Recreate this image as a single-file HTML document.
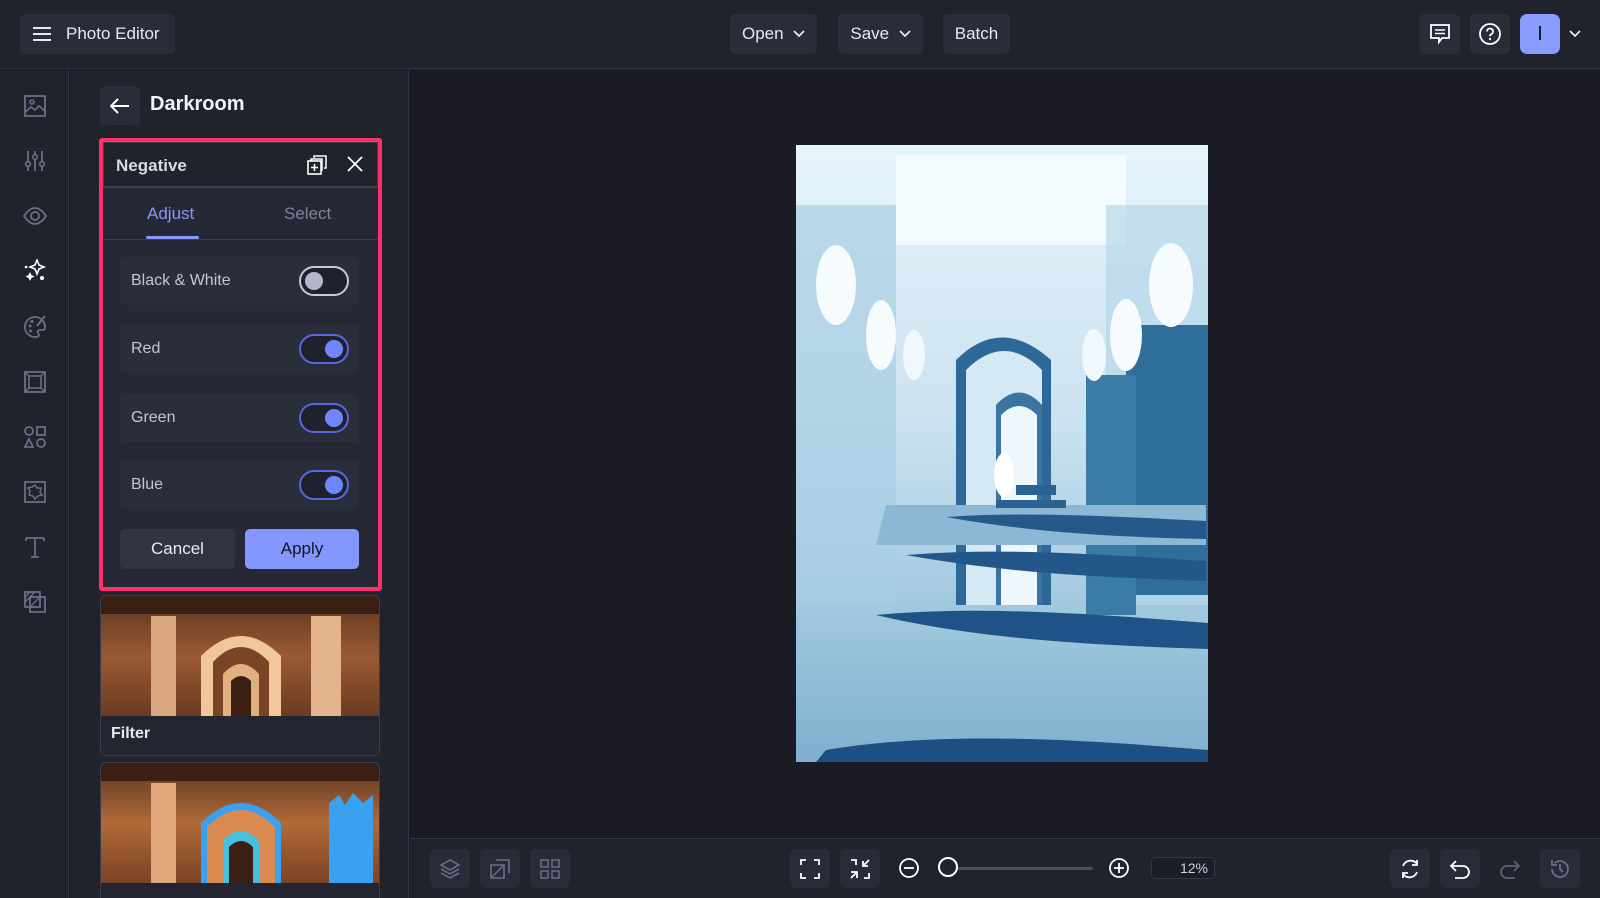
<!DOCTYPE html>
<html><head><meta charset="utf-8"><style>
*{box-sizing:border-box;margin:0;padding:0}
html,body{overflow:hidden}
body{width:1600px;height:898px;background:#1a1b24;font-family:"Liberation Sans",sans-serif;color:#e6e7ee;position:relative}
.abs{position:absolute}
.top{left:0;top:0;width:1600px;height:69px;background:#20222c;border-bottom:1px solid #33364a}
.btn{position:absolute;background:#2a2c39;border-radius:5px;display:flex;align-items:center;justify-content:center;font-size:17px;color:#e8e9f0}
.side{left:0;top:70px;width:69px;height:828px;background:#20222c;border-right:1px solid #33364a}
.panel{left:70px;top:70px;width:339px;height:828px;background:#20222c;border-right:1px solid #33364a}
.ic{position:absolute;left:23px;width:24px;height:24px}
svg{display:block}
.row{position:absolute;left:120px;width:239px;height:48px;background:#2a2d3a;border-radius:5px;font-size:16px;color:#c4c6d2;display:flex;align-items:center;padding-left:11px}
.tg{position:absolute;right:10px;top:9px;width:50px;height:30px;border-radius:15px;border:2px solid #5a66e0;background:#1f212c}
.tg:after{content:"";position:absolute;right:4px;top:4px;width:18px;height:18px;border-radius:50%;background:#7086ff}
.tg.off{border-color:#c9cad6}
.tg.off:after{left:4px;right:auto;background:#b4b6cc}
.bb{position:absolute;top:849px;width:40px;height:39px;background:#292b38;border-radius:5px;display:flex;align-items:center;justify-content:center}
</style></head><body>
<div class="abs top"></div>
<div class="btn" style="left:20px;top:14px;width:155px;height:40px;justify-content:flex-start;padding-left:12px">
<svg width="20" height="16" viewBox="0 0 20 16"><path d="M1 2h18M1 8h18M1 14h18" stroke="#e8e9f0" stroke-width="2"/></svg><span style="margin-left:14px">Photo Editor</span></div>
<div class="btn" style="left:730px;top:14px;width:87px;height:40px">Open&nbsp;&nbsp;<svg width="12" height="8"><path d="M1 1l5 5 5-5" stroke="#e8e9f0" stroke-width="1.8" fill="none"/></svg></div>
<div class="btn" style="left:838px;top:14px;width:85px;height:40px">Save&nbsp;&nbsp;<svg width="12" height="8"><path d="M1 1l5 5 5-5" stroke="#e8e9f0" stroke-width="1.8" fill="none"/></svg></div>
<div class="btn" style="left:943px;top:14px;width:67px;height:40px">Batch</div>
<div class="btn" style="left:1419px;top:14px;width:41px;height:40px"><svg width="22" height="22" viewBox="0 0 22 22"><path d="M2 2h18v13h-7l-3 4v-4H2z" stroke="#fff" stroke-width="1.8" fill="none"/><path d="M6 7h10M6 10.5h10" stroke="#fff" stroke-width="1.6"/></svg></div>
<div class="btn" style="left:1470px;top:14px;width:40px;height:40px"><svg width="24" height="24" viewBox="0 0 24 24"><circle cx="12" cy="12" r="10" stroke="#fff" stroke-width="1.8" fill="none"/><path d="M9 9.5a3 3 0 1 1 4 2.8c-.8.4-1 1-1 2" stroke="#fff" stroke-width="1.8" fill="none"/><circle cx="12" cy="17" r="1.1" fill="#fff"/></svg></div>
<div class="btn" style="left:1520px;top:14px;width:40px;height:40px;background:#8a9bff;border-radius:7px;color:#111;font-size:20px">I</div>
<svg class="abs" style="left:1569px;top:30px" width="12" height="8"><path d="M1 1l5 5 5-5" stroke="#e8e9f0" stroke-width="1.8" fill="none"/></svg>

<div class="abs side">
<svg class="ic" style="top:24px" viewBox="0 0 24 24"><rect x="2" y="2" width="20" height="20" stroke="#6b6f85" stroke-width="1.8" fill="none"/><circle cx="9" cy="8" r="2" stroke="#6b6f85" stroke-width="1.6" fill="none"/><path d="M2 18l6-5 4 3 4-4 6 5" stroke="#6b6f85" stroke-width="1.6" fill="none"/></svg>
<svg class="ic" style="top:79px" viewBox="0 0 24 24"><path d="M5 2v20M12 2v20M19 2v20" stroke="#6b6f85" stroke-width="1.8"/><circle cx="5" cy="15" r="2.3" fill="#20222c" stroke="#6b6f85" stroke-width="1.6"/><circle cx="12" cy="8" r="2.3" fill="#20222c" stroke="#6b6f85" stroke-width="1.6"/><circle cx="19" cy="15" r="2.3" fill="#20222c" stroke="#6b6f85" stroke-width="1.6"/></svg>
<svg class="ic" style="top:134px" viewBox="0 0 24 24"><path d="M1 12c4-6 8-8 11-8s7 2 11 8c-4 6-8 8-11 8s-7-2-11-8z" stroke="#6b6f85" stroke-width="1.8" fill="none"/><circle cx="12" cy="12" r="4" stroke="#6b6f85" stroke-width="1.8" fill="none"/></svg>
<svg class="ic" style="top:189px" viewBox="0 0 24 24"><path d="M14 1l2 5 5 2-5 2-2 5-2-5-5-2 5-2z" stroke="#fff" stroke-width="1.6" fill="none"/><path d="M7 13l1.5 3 3 1.5-3 1.5L7 22l-1.5-3-3-1.5 3-1.5z" fill="#fff"/><circle cx="3" cy="8" r="1.3" fill="#fff"/><circle cx="19" cy="19" r="2" fill="#fff"/></svg>
<svg class="ic" style="top:245px" viewBox="0 0 24 24"><path d="M12 2a10 10 0 1 0 3 19.5c1.5-.5 1-2.5 0-3.5s0-3 2-3h3c2 0 2-2 2-3A10 10 0 0 0 12 2z" stroke="#6b6f85" stroke-width="1.8" fill="none"/><circle cx="7" cy="11" r="1.5" fill="#6b6f85"/><circle cx="9" cy="6.5" r="1.5" fill="#6b6f85"/><circle cx="7.5" cy="16" r="1.5" fill="#6b6f85"/><path d="M22 1l-8 10" stroke="#6b6f85" stroke-width="2"/></svg>
<svg class="ic" style="top:300px" viewBox="0 0 24 24"><rect x="2" y="2" width="20" height="20" stroke="#6b6f85" stroke-width="1.8" fill="none"/><rect x="6" y="6" width="12" height="12" stroke="#6b6f85" stroke-width="1.6" fill="none"/><path d="M2 2l4 4M22 2l-4 4M2 22l4-4M22 22l-4-4" stroke="#6b6f85" stroke-width="1.4"/></svg>
<svg class="ic" style="top:355px" viewBox="0 0 24 24"><circle cx="6" cy="6" r="4" stroke="#6b6f85" stroke-width="1.8" fill="none"/><rect x="14" y="2" width="8" height="8" stroke="#6b6f85" stroke-width="1.8" fill="none"/><path d="M6 14l4 8H2z" stroke="#6b6f85" stroke-width="1.8" fill="none"/><circle cx="18" cy="18" r="4" stroke="#6b6f85" stroke-width="1.8" fill="none"/></svg>
<svg class="ic" style="top:410px" viewBox="0 0 24 24"><rect x="2" y="2" width="20" height="20" stroke="#6b6f85" stroke-width="1.8" fill="none"/><path d="M12 5l2 3 4 0-1 4 2 3-4 1-3 3-2-3-4-1 1-4-2-3 4-1z" stroke="#6b6f85" stroke-width="1.5" fill="none"/></svg>
<svg class="ic" style="top:465px" viewBox="0 0 24 24"><path d="M3 3h18M12 3v19M8 22h8M3 3v3M21 3v3" stroke="#6b6f85" stroke-width="1.8" fill="none"/></svg>
<svg class="ic" style="top:520px" viewBox="0 0 24 24"><rect x="2" y="2" width="15" height="15" stroke="#6b6f85" stroke-width="1.8" fill="none"/><rect x="7" y="7" width="15" height="15" stroke="#6b6f85" stroke-width="1.8" fill="none"/><path d="M2 12l10-10M2 7l5-5M7 17l10-10" stroke="#6b6f85" stroke-width="1.3"/></svg>
</div>

<div class="abs panel"></div>
<div class="btn" style="left:100px;top:86px;width:40px;height:39px"><svg width="20" height="16" viewBox="0 0 20 16"><path d="M19 8H2M8 1L1 8l7 7" stroke="#fff" stroke-width="2" fill="none"/></svg></div>
<div class="abs" style="left:150px;top:93px;font-size:20px;font-weight:bold;color:#f2f3f7">Darkroom</div>

<div class="abs" style="left:99px;top:138px;width:283px;height:453px;border:4px solid #ff2e6c;border-radius:3px;background:#262836">
 <div class="abs" style="left:0;top:0;width:275px;height:46px;background:#20222c;border:1px solid #3d4152;border-bottom:2px solid #3d4152"></div>
 <div class="abs" style="left:13px;top:14px;font-size:17px;font-weight:bold;color:#d8d9e2">Negative</div>
 <svg class="abs" style="left:204px;top:13px" width="20" height="20" viewBox="0 0 20 20"><rect x="1" y="6" width="13" height="13" stroke="#fff" stroke-width="1.6" fill="#20222c"/><path d="M4 6V4h11v11h-1M7 3V1h12v12h-2" stroke="#fff" stroke-width="1.5" fill="none"/><path d="M7.5 9v7M4 12.5h7" stroke="#fff" stroke-width="1.5"/></svg>
 <svg class="abs" style="left:244px;top:14px" width="16" height="16"><path d="M1 1l14 14M15 1L1 15" stroke="#fff" stroke-width="1.8"/></svg>
 <div class="abs" style="left:44px;top:62px;font-size:17px;color:#8896ff">Adjust</div>
 <div class="abs" style="left:43px;top:94px;width:53px;height:3px;background:#8896ff;border-radius:2px"></div>
 <div class="abs" style="left:181px;top:62px;font-size:17px;color:#80849a">Select</div>
 <div class="abs" style="left:0;top:97px;width:275px;height:1px;background:#3a3d4d"></div>
</div>
<div class="row" style="top:257px">Black &amp; White<div class="tg off"></div></div>
<div class="row" style="top:325px">Red<div class="tg"></div></div>
<div class="row" style="top:394px">Green<div class="tg"></div></div>
<div class="row" style="top:461px">Blue<div class="tg"></div></div>
<div class="btn" style="left:120px;top:529px;width:115px;height:40px;background:#313443">Cancel</div>
<div class="btn" style="left:245px;top:529px;width:114px;height:40px;background:#8397ff;color:#141520">Apply</div>

<div class="abs" style="left:100px;top:595px;width:280px;height:161px;border:1px solid #3a3d4d;border-radius:6px;overflow:hidden;background:#232531">
<svg width="280" height="120" viewBox="0 0 280 120"><defs><linearGradient id="br" x1="0" y1="0" x2="0" y2="1"><stop offset="0" stop-color="#5a3420"/><stop offset=".5" stop-color="#9a5a33"/><stop offset="1" stop-color="#6b3b22"/></linearGradient></defs><rect width="280" height="120" fill="url(#br)"/><rect x="50" y="20" width="25" height="100" fill="#d9a77e"/><rect x="210" y="20" width="30" height="100" fill="#e3b48b"/><path d="M100 120V60q40-40 80 0v60z" fill="#f0c69a"/><path d="M112 120V66q28-30 56 0v54z" fill="#7a4526"/><path d="M122 120V78q18-20 36 0v42z" fill="#e1b080"/><path d="M130 120V85q10-10 20 0v35z" fill="#3a1f12"/><rect x="0" y="0" width="280" height="18" fill="#3a2014"/></svg>
<div style="padding:9px 10px;font-size:16px;font-weight:bold;color:#e8e9ef">Filter</div></div>
<div class="abs" style="left:100px;top:762px;width:280px;height:136px;border:1px solid #3a3d4d;border-bottom:none;border-radius:6px 6px 0 0;overflow:hidden;background:#232531">
<svg width="280" height="120" viewBox="0 0 280 120"><defs><linearGradient id="br2" x1="0" y1="0" x2="0" y2="1"><stop offset="0" stop-color="#5a3420"/><stop offset=".5" stop-color="#b06a38"/><stop offset="1" stop-color="#7b4325"/></linearGradient></defs><rect width="280" height="120" fill="url(#br2)"/><rect x="50" y="20" width="25" height="100" fill="#e1a77a"/><path d="M100 120V60q40-40 80 0v60z" fill="#3aa0f0"/><path d="M106 120V64q34-34 68 0v56z" fill="#d88a50"/><path d="M122 120V78q18-20 36 0v42z" fill="#45c0e0"/><path d="M128 120V84q12-12 24 0v36z" fill="#3a1f12"/><path d="M228 120V40l10-8 6 10 8-12 10 10 10-8v88z" fill="#3aa0f0"/><rect x="0" y="0" width="280" height="18" fill="#3a2014"/></svg></div>

<!-- canvas image -->
<svg class="abs" style="left:796px;top:145px" width="412" height="617" viewBox="0 0 412 617">
<defs>
<linearGradient id="bg" x1="0" y1="0" x2="0" y2="1"><stop offset="0" stop-color="#e6f4fb"/><stop offset=".45" stop-color="#cbe2f0"/><stop offset=".7" stop-color="#a9cde2"/><stop offset="1" stop-color="#7fb0cf"/></linearGradient>
</defs>
<rect width="412" height="617" fill="url(#bg)"/>
<rect x="100" y="10" width="230" height="90" fill="#f3fbff"/>
<rect x="0" y="60" width="100" height="400" fill="#a8cde3" opacity=".7"/>
<rect x="310" y="60" width="102" height="400" fill="#b6d7ea" opacity=".7"/>
<path d="M330 180h82v270h-82z" fill="#2f6d9a"/>
<path d="M290 230h50v240h-50z" fill="#3c7ba6"/>
<path d="M160 460V215q45-45 95 0v245z" fill="#2e6898"/>
<path d="M170 460V225q38-38 76 0v235z" fill="#d4e9f4"/>
<path d="M200 460V260q23-25 46 0v200z" fill="#3a74a0"/>
<path d="M205 460V270q18-18 36 0v190z" fill="#eef8fc"/>
<ellipse cx="40" cy="140" rx="20" ry="40" fill="#f6fbfe"/>
<ellipse cx="85" cy="190" rx="15" ry="35" fill="#f6fbfe"/>
<ellipse cx="118" cy="210" rx="11" ry="25" fill="#f0f8fd"/>
<ellipse cx="375" cy="140" rx="22" ry="42" fill="#f6fbfe"/>
<ellipse cx="330" cy="190" rx="16" ry="36" fill="#f6fbfe"/>
<ellipse cx="298" cy="210" rx="12" ry="26" fill="#f0f8fd"/>
<path d="M90 360h320v40H80z" fill="#8cb8d6"/>
<path d="M150 372c80-6 180 0 260 4v18c-90-2-170-6-260-22z" fill="#25598a"/>
<path d="M110 410c100-8 200 0 300 6v20c-110-4-200-8-300-26z" fill="#23578a"/>
<path d="M80 470c110-10 230 0 332 8v26c-120-4-230-10-332-34z" fill="#1f5286"/>
<path d="M30 605c120-20 260-10 382 0v12H20z" fill="#1d4f82"/>
<path d="M220 340h40v10h-40zM200 355h70v8h-70z" fill="#2a6292"/>
<ellipse cx="208" cy="330" rx="10" ry="22" fill="#fff"/>
</svg>

<!-- bottom toolbar -->
<div class="abs" style="left:410px;top:838px;width:1190px;height:60px;background:#20222c;border-top:1px solid #33364a"></div>
<div class="bb" style="left:430px"><svg width="22" height="22" viewBox="0 0 22 22"><path d="M11 2l9 5-9 5-9-5z M2 11l9 5 9-5M2 15l9 5 9-5" stroke="#6b6f85" stroke-width="1.6" fill="none"/></svg></div>
<div class="bb" style="left:480px"><svg width="22" height="22" viewBox="0 0 22 22"><path d="M7 2h13v13M2 7h13v13H2z" stroke="#6b6f85" stroke-width="1.6" fill="none"/><path d="M2 20L15 7" stroke="#6b6f85" stroke-width="1.4"/></svg></div>
<div class="bb" style="left:530px"><svg width="22" height="22" viewBox="0 0 22 22"><rect x="2" y="2" width="7" height="7" stroke="#6b6f85" stroke-width="1.5" fill="none"/><rect x="13" y="2" width="7" height="7" stroke="#6b6f85" stroke-width="1.5" fill="none"/><rect x="2" y="13" width="7" height="7" stroke="#6b6f85" stroke-width="1.5" fill="none"/><rect x="13" y="13" width="7" height="7" stroke="#6b6f85" stroke-width="1.5" fill="none"/></svg></div>
<div class="bb" style="left:790px"><svg width="22" height="22" viewBox="0 0 22 22"><path d="M2 7V2h5M15 2h5v5M20 15v5h-5M7 20H2v-5" stroke="#fff" stroke-width="1.8" fill="none"/></svg></div>
<div class="bb" style="left:840px"><svg width="22" height="22" viewBox="0 0 22 22"><path d="M2 2h5v5M20 2l-6 6M14 3v5h5M2 14h6v6M8 14l-6 6M15 20h5v-5" stroke="#fff" stroke-width="1.8" fill="none"/></svg></div>
<svg class="abs" style="left:898px;top:857px" width="22" height="22" viewBox="0 0 22 22"><circle cx="11" cy="11" r="9" stroke="#fff" stroke-width="1.8" fill="none"/><path d="M6 11h10" stroke="#fff" stroke-width="1.8"/></svg>
<div class="abs" style="left:948px;top:867px;width:145px;height:3px;background:#4a4e60;border-radius:2px"></div>
<div class="abs" style="left:938px;top:857px;width:20px;height:20px;border-radius:50%;border:2px solid #fff;background:#20222c"></div>
<svg class="abs" style="left:1108px;top:857px" width="22" height="22" viewBox="0 0 22 22"><circle cx="11" cy="11" r="9" stroke="#fff" stroke-width="1.8" fill="none"/><path d="M6 11h10M11 6v10" stroke="#fff" stroke-width="1.8"/></svg>
<div class="abs" style="left:1151px;top:857px;width:64px;height:22px;border:1px solid #33364a;border-radius:4px;background:#1c1e27;font-size:14px;color:#d0d2dc;text-align:right;padding:2px 6px">12%</div>
<div class="bb" style="left:1390px"><svg width="22" height="22" viewBox="0 0 22 22"><path d="M4 8a8 8 0 0 1 14-2M18 14a8 8 0 0 1-14 2M18 2v5h-5M4 20v-5h5" stroke="#fff" stroke-width="1.8" fill="none"/></svg></div>
<div class="bb" style="left:1440px"><svg width="22" height="22" viewBox="0 0 22 22"><path d="M7 3L2 8l5 5M2 8h12a6 6 0 0 1 0 12H6" stroke="#fff" stroke-width="1.8" fill="none"/></svg></div>
<div class="bb" style="left:1490px;background:#20222c"><svg width="22" height="22" viewBox="0 0 22 22"><path d="M15 3l5 5-5 5M20 8H8a6 6 0 0 0 0 12h8" stroke="#5d6174" stroke-width="1.8" fill="none"/></svg></div>
<div class="bb" style="left:1540px"><svg width="22" height="22" viewBox="0 0 22 22"><path d="M3 11a8 8 0 1 0 2.5-5.8M3 2v5h5" stroke="#6b6f85" stroke-width="1.8" fill="none"/><path d="M11 6v5l3 3" stroke="#6b6f85" stroke-width="1.8" fill="none"/></svg></div>
</body></html>
